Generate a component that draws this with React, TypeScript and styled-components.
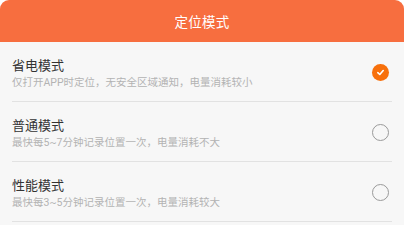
import React, { useState } from 'react'
import styled, { createGlobalStyle } from 'styled-components'

const GlobalStyle = createGlobalStyle`
   html, body {
      margin: 0;
      padding: 0;
      background: #ffffff;
   }
   body {
      font-family: Roboto, "Noto Sans CJK SC", "Noto Sans", sans-serif;
   }
`

const modes = [
   { title: '省电模式', desc: '仅打开APP时定位，无安全区域通知，电量消耗较小' },
   { title: '普通模式', desc: '最快每5~7分钟记录位置一次，电量消耗不大' },
   { title: '性能模式', desc: '最快每3~5分钟记录位置一次，电量消耗较大' },
]

const App = () => {
   const [selected, setSelected] = useState(0)
   return (
      <>
         <GlobalStyle />
         <Sheet>
            <Header>定位模式</Header>
            <List>
               {modes.map((m, i) => (
                  <Row key={i} onClick={() => setSelected(i)}>
                     <Text>
                        <Title>{m.title}</Title>
                        <Desc>{m.desc}</Desc>
                     </Text>
                     <Radio checked={selected === i}>
                        {selected === i && (
                           <svg width="9" height="9" viewBox="0 0 10 10">
                              <path
                                 d="M2 5.2 L4.2 7.2 L8 2.8"
                                 fill="none"
                                 stroke="#fff"
                                 strokeWidth="1.8"
                                 strokeLinecap="round"
                                 strokeLinejoin="round"
                              />
                           </svg>
                        )}
                     </Radio>
                  </Row>
               ))}
            </List>
         </Sheet>
      </>
   )
}

const Sheet = styled('div')`
   width: 404px;
   height: 225px;
   overflow: hidden;
   background: #f7f7f7;
   border-radius: 9px 9px 0 0;
`
const Header = styled('div')`
   height: 42px;
   display: flex;
   align-items: center;
   justify-content: center;
   background: #f76e3f;
   color: #fff;
   font-size: 13.5px;
   letter-spacing: 0.3px;
`
const List = styled('div')`
   display: flex;
   flex-direction: column;
   padding: 0 12px;
`
const Row = styled('div')`
   height: 60px;
   display: flex;
   align-items: center;
   justify-content: space-between;
   border-bottom: 1px solid #e2e2e2;
   box-sizing: border-box;
   cursor: pointer;
`
const Text = styled('div')`
   display: flex;
   flex-direction: column;
   gap: 2px;
   margin-top: 4px;
`
const Title = styled('span')`
   font-size: 13px;
   color: #333;
   line-height: 17px;
`
const Desc = styled('span')`
   font-size: 10.5px;
   color: #b3b3b3;
   line-height: 14px;
`
const Radio = styled('span')<{ checked: boolean }>`
   width: 17px;
   height: 17px;
   box-sizing: border-box;
   border-radius: 50%;
   margin-right: 3px;
   margin-top: 2px;
   display: flex;
   align-items: center;
   justify-content: center;
   border: ${(p) => (p.checked ? 'none' : '1px solid #9a9a9a')};
   background: ${(p) => (p.checked ? '#f7700c' : 'transparent')};
`

export default App
